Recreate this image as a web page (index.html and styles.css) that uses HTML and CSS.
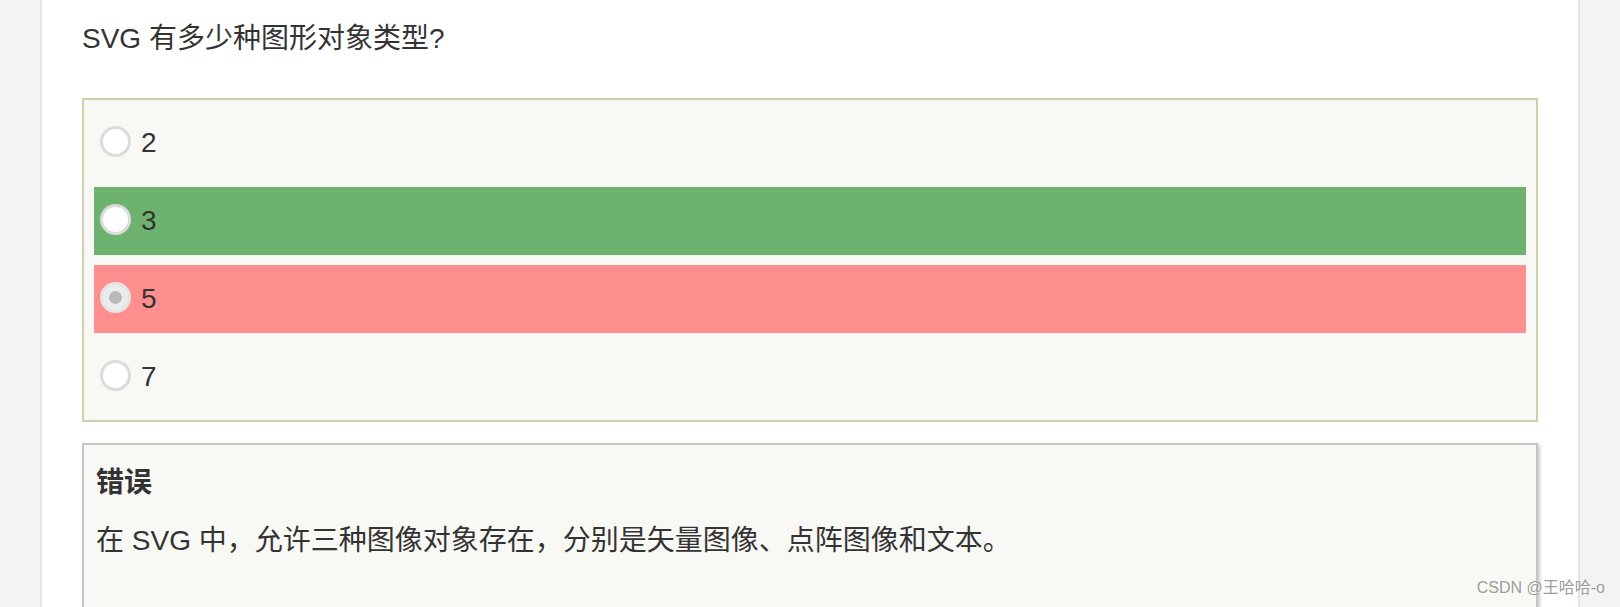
FILE: index.html
```html
<!DOCTYPE html>
<html lang="zh-CN">
<head>
    <meta charset="UTF-8">
    <meta name="viewport" content="width=device-width, initial-scale=1.0">
    <title>SVG 测验</title>
    <link rel="stylesheet" href="styles.css">
</head>
<body>

    <div class="page">
        <div class="question">SVG 有多少种图形对象类型?</div>

        <div class="options">
            <div class="option">
                <span class="radio"></span>
                <span class="label">2</span>
            </div>
            <div class="option correct">
                <span class="radio"></span>
                <span class="label">3</span>
            </div>
            <div class="option wrong">
                <span class="radio checked"></span>
                <span class="label">5</span>
            </div>
            <div class="option">
                <span class="radio"></span>
                <span class="label">7</span>
            </div>
        </div>

        <div class="explain">
            <div class="explain-title">错误</div>
            <p>在 SVG 中，允许三种图像对象存在，分别是矢量图像、点阵图像和文本。</p>
        </div>
    </div>

    <div class="watermark">CSDN @王哈哈-o</div>

</body>
</html>
```

FILE: styles.css
```css
body {
    font-family: "Liberation Sans", "Noto Sans CJK SC", sans-serif;
    margin: 0;
    padding: 0;
    background-color: #f3f3f2;
    color: #333;
    height: 607px;
    overflow: hidden;
}
.page {
    margin: 0 40px;
    padding: 19px 40px 0;
    background-color: #fff;
    border-left: 2px solid #e4e4df;
    border-right: 2px solid #e4e4df;
    height: 100%;
    box-sizing: border-box;
    overflow: hidden;
}
.question {
    font-size: 28px;
    line-height: 40px;
    margin-bottom: 39px;
}
.options {
    background-color: #f8f8f4;
    border: 2px solid #c9d3ae;
    padding: 9px 10px;
    display: flex;
    flex-direction: column;
    gap: 10px;
    margin-bottom: 21px;
}
.option {
    height: 68px;
    display: flex;
    align-items: center;
    padding-left: 6px;
    font-size: 28px;
}
.option.correct {
    background-color: #6db36f;
}
.option.wrong {
    background-color: #ff8f8f;
}
.radio {
    width: 31px;
    height: 31px;
    box-sizing: border-box;
    border-radius: 50%;
    border: 3px solid #dcdcdc;
    background-color: #fff;
    margin-right: 10px;
    margin-bottom: 3px;
    display: flex;
    align-items: center;
    justify-content: center;
}
.radio.checked {
    background-color: #ececec;
    border-color: #e4e4e4;
}
.radio.checked::after {
    content: "";
    width: 13px;
    height: 13px;
    border-radius: 50%;
    background-color: #b9b9b9;
}
.label {
    line-height: 40px;
}
.explain {
    background-color: #f8f8f4;
    border: 2px solid #c5c5c5;
    box-shadow: 2px 2px 3px rgba(0, 0, 0, 0.2);
    padding: 18px 12px 0;
    height: 200px;
}
.explain-title {
    font-size: 28px;
    font-weight: bold;
    line-height: 40px;
}
.explain p {
    font-size: 28px;
    line-height: 40px;
    margin: 18px 0 0;
}
.watermark {
    position: absolute;
    right: 15px;
    bottom: 9px;
    font-size: 16px;
    color: #9c9c9c;
    text-shadow: 0 0 2px rgba(255, 255, 255, 0.9);
}
```
